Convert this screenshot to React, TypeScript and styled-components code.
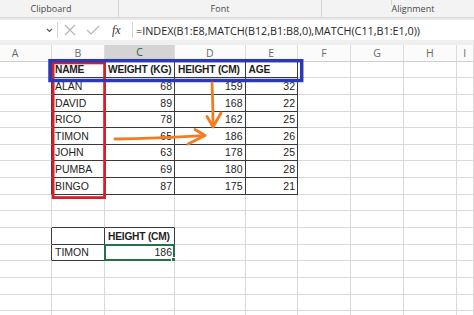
import React from "react";
import styled, { createGlobalStyle, css } from "styled-components";

const Global = createGlobalStyle`
  html, body { margin: 0; padding: 0; background: #ffffff; overflow: hidden; }
  * { box-sizing: border-box; }
`;

const COLS = ["A", "B", "C", "D", "E", "F", "G", "H", "I"];
const COL_WIDTHS = "52px 53px 70px 70.5px 52.5px 53px 53px 52.5px 1fr";
const ROW_H = 16.65;
const ROW_COUNT = 16;

type Cell = { v: string; bold?: boolean; num?: boolean };

const DATA: Record<string, Cell> = {};
const put = (ref: string, v: string, bold = false, num = false) => {
  DATA[ref] = { v, bold, num };
};
put("B1", "NAME", true);
put("C1", "WEIGHT (KG)", true);
put("D1", "HEIGHT (CM)", true);
put("E1", "AGE", true);
const rows: [string, string, string, string][] = [
  ["ALAN", "68", "159", "32"],
  ["DAVID", "89", "168", "22"],
  ["RICO", "78", "162", "25"],
  ["TIMON", "65", "186", "26"],
  ["JOHN", "63", "178", "25"],
  ["PUMBA", "69", "180", "28"],
  ["BINGO", "87", "175", "21"],
];
rows.forEach((r, i) => {
  const n = i + 2;
  put(`B${n}`, r[0]);
  put(`C${n}`, r[1], false, true);
  put(`D${n}`, r[2], false, true);
  put(`E${n}`, r[3], false, true);
});
put("C11", "HEIGHT (CM)", true);
put("B12", "TIMON");
put("C12", "186", false, true);

const boxed = (c: number, r: number) =>
  (c >= 1 && c <= 4 && r >= 1 && r <= 8) ||
  (c >= 1 && c <= 2 && r >= 11 && r <= 12);

const Page = styled.div`
  position: relative;
  width: 474px;
  height: 315px;
  overflow: hidden;
  display: flex;
  flex-direction: column;
  background: #ffffff;
`;

const Ribbon = styled.div`
  height: 18px;
  flex: none;
  display: grid;
  grid-template-columns: 119px 203px 1fr;
  background: #f3f3f3;
  border-bottom: 1px solid #dadada;
`;

const RibbonGroup = styled.div<{ $padL?: number; $padR?: number }>`
  position: relative;
  display: flex;
  align-items: flex-end;
  justify-content: center;
  padding: 0 ${(p) => p.$padR ?? 0}px 2px ${(p) => p.$padL ?? 0}px;
  font-family: "Open Sans", "Liberation Sans", sans-serif;
  font-size: 9px;
  color: #4a4a4a;
  border-right: 1px solid #d4d4d4;
  &:last-child { border-right: none; }
`;

const RibbonTick = styled.span`
  position: absolute;
  left: 69px;
  top: 0;
  width: 1px;
  height: 5px;
  background: #d4d4d4;
`;

const RibbonGap = styled.div`
  height: 2px;
  flex: none;
  background: #e9e9e9;
`;

const FormulaBar = styled.div`
  height: 20px;
  flex: none;
  display: flex;
  align-items: stretch;
  background: #ffffff;
`;

const NameBox = styled.div`
  width: 57px;
  display: flex;
  align-items: center;
  justify-content: flex-end;
  padding-right: 4px;
  color: #606060;
`;

const BarDivider = styled.div`
  width: 1px;
  margin: 2px 0;
  background: #d6d6d6;
`;

const FxButtons = styled.div`
  width: 74px;
  display: flex;
  align-items: center;
  padding-left: 6px;
  gap: 10px;
`;

const FxLabel = styled.span`
  font-family: "Liberation Serif", "DejaVu Serif", serif;
  font-style: italic;
  font-size: 12px;
  color: #333;
  margin-left: 2px;
`;

const FormulaInput = styled.div`
  flex: 1;
  display: flex;
  align-items: center;
  padding-left: 3px;
  font-family: "Open Sans", "Liberation Sans", sans-serif;
  font-size: 10.8px;
  color: #262626;
  white-space: nowrap;
  overflow: hidden;
`;

const BarGap = styled.div`
  height: 5px;
  flex: none;
  background: #efefef;
`;

const Sheet = styled.div`
  flex: 1;
  display: grid;
  grid-template-columns: ${COL_WIDTHS};
  grid-template-rows: ${ROW_H}px repeat(${ROW_COUNT}, ${ROW_H}px);
  background: #ffffff;
`;

const ColHeader = styled.div<{ $active?: boolean; $shift?: number }>`
  display: flex;
  align-items: center;
  justify-content: center;
  padding-right: ${(p) => p.$shift ?? 0}px;
  font-family: "Open Sans", "Liberation Sans", sans-serif;
  font-size: 10.5px;
  color: #6a6a6a;
  background: #fbfbfb;
  border-right: 1px solid #dcdcdc;
  border-bottom: 1px solid #cfcfcf;
  ${(p) =>
    p.$active &&
    css`
      background: #d4d4d4;
      color: #2d5a3c;
      border-bottom: 2px solid #217346;
    `}
`;

const GridCell = styled.div<{ $num?: boolean; $bold?: boolean; $rDark?: boolean; $bDark?: boolean }>`
  position: relative;
  display: flex;
  align-items: flex-end;
  justify-content: ${(p) => (p.$num ? "flex-end" : "flex-start")};
  padding: 0 2px 1px 3px;
  font-family: "Liberation Sans", Arial, sans-serif;
  font-size: ${(p) => (p.$bold ? "10.2px" : "10.5px")};
  letter-spacing: ${(p) => (p.$bold ? "-0.2px" : "0")};
  line-height: 13px;
  font-weight: ${(p) => (p.$bold ? 700 : 400)};
  color: #1e1e1e;
  white-space: nowrap;
  border-right: 1px solid ${(p) => (p.$rDark ? "#3a3a3a" : "#d9d9d9")};
  border-bottom: 1px solid ${(p) => (p.$bDark ? "#3a3a3a" : "#d9d9d9")};
`;

const Selection = styled.span`
  position: absolute;
  left: -1px;
  top: -1px;
  right: -1px;
  bottom: -1px;
  border: 2px solid #217346;
  pointer-events: none;
`;

const Handle = styled.span`
  position: absolute;
  right: -3px;
  bottom: -3px;
  width: 5px;
  height: 5px;
  background: #217346;
  border: 1px solid #ffffff;
`;

const Overlay = styled.svg`
  position: absolute;
  left: 0;
  top: 0;
  pointer-events: none;
`;

const Chevron = () => (
  <svg width="7" height="5" viewBox="0 0 7 5">
    <path d="M1 1 L3.5 3.5 L6 1" fill="none" stroke="#555" strokeWidth="1.1" />
  </svg>
);

const CancelIcon = () => (
  <svg width="12" height="12" viewBox="0 0 12 12">
    <path d="M1 1 L11 11 M11 1 L1 11" stroke="#b4b4b4" strokeWidth="1.1" fill="none" />
  </svg>
);

const CheckIcon = () => (
  <svg width="14" height="10" viewBox="0 0 14 10">
    <path d="M1 5 L5 9 L13 1" stroke="#b4b4b4" strokeWidth="1.1" fill="none" />
  </svg>
);

export default function App() {
  const cells: React.ReactNode[] = [];
  COLS.forEach((c, i) => {
    cells.push(
      <ColHeader key={`h${c}`} $active={c === "C"} $shift={i === 0 ? 21 : 0}>
        {c}
      </ColHeader>
    );
  });
  for (let r = 1; r <= ROW_COUNT; r++) {
    COLS.forEach((c, ci) => {
      const ref = `${c}${r}`;
      const d = DATA[ref];
      const rDark = boxed(ci, r) || boxed(ci + 1, r);
      const bDark = boxed(ci, r) || boxed(ci, r + 1);
      cells.push(
        <GridCell key={ref} $num={d?.num} $bold={d?.bold} $rDark={rDark} $bDark={bDark}>
          {d?.v}
          {ref === "C12" && (
            <Selection>
              <Handle />
            </Selection>
          )}
        </GridCell>
      );
    });
  }
  return (
    <>
      <Global />
      <Page>
        <Ribbon>
          <RibbonGroup $padR={16}>Clipboard</RibbonGroup>
          <RibbonGroup>Font</RibbonGroup>
          <RibbonGroup $padL={30}>
            <RibbonTick />
            Alignment
          </RibbonGroup>
        </Ribbon>
        <RibbonGap />
        <FormulaBar>
          <NameBox>
            <Chevron />
          </NameBox>
          <BarDivider />
          <FxButtons>
            <CancelIcon />
            <CheckIcon />
            <FxLabel>fx</FxLabel>
          </FxButtons>
          <BarDivider />
          <FormulaInput>=INDEX(B1:E8,MATCH(B12,B1:B8,0),MATCH(C11,B1:E1,0))</FormulaInput>
        </FormulaBar>
        <BarGap />
        <Sheet>{cells}</Sheet>
        <Overlay width="474" height="315" viewBox="0 0 474 315">
          <rect x="53.1" y="62.9" width="51.5" height="134.7" fill="none" stroke="#d4202b" strokeWidth="2.8" />
          <rect x="50" y="60.7" width="251.7" height="19.8" fill="none" stroke="#2b3ab4" strokeWidth="3.5" />
          <g fill="none" stroke="#f47c20" strokeWidth="2.8" strokeLinecap="round" strokeLinejoin="round">
            <path d="M212 83 C212.6 96 213 110 213 126" />
            <path d="M207 116.5 L213 127 L221 113" />
            <path d="M115 139 C140 138.6 172 137.4 204 135.6" />
            <path d="M195 129.5 L205 135.5 L188 144" />
          </g>
        </Overlay>
      </Page>
    </>
  );
}
